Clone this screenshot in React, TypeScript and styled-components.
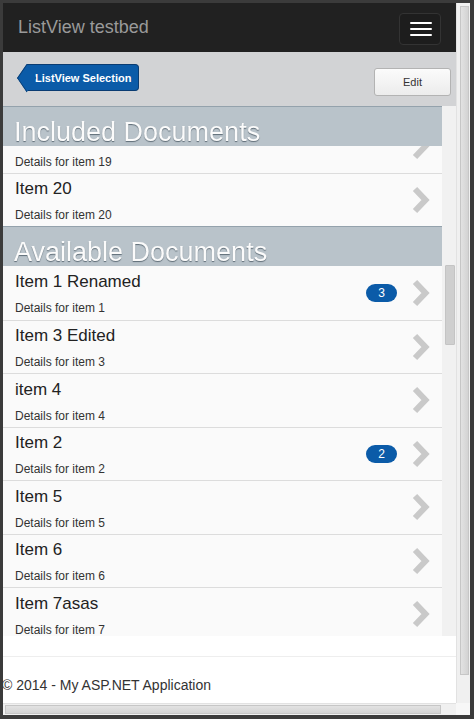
import React, { useLayoutEffect, useRef } from "react";
import styled, { createGlobalStyle } from "styled-components";

const GlobalStyle = createGlobalStyle`
  html, body {
    margin: 0;
    padding: 0;
    background: #3b3b3b;
    font-family: "Liberation Sans", Arial, sans-serif;
  }
`;

const Frame = styled.div`
  padding: 3px 4px 4px 3px;
  width: 467px;
  height: 712px;
`;

const Window = styled.div`
  display: grid;
  grid-template-columns: 453px 14px;
  grid-template-rows: 700px 12px;
  width: 467px;
  height: 712px;
`;

const Page = styled.div`
  display: flex;
  flex-direction: column;
  background: #fff;
  overflow: hidden;
`;

const Navbar = styled.nav`
  display: flex;
  align-items: center;
  justify-content: space-between;
  height: 49px;
  flex-shrink: 0;
  padding: 0 15px;
  background: #212121;
  box-sizing: border-box;
`;

const Brand = styled.span`
  font-size: 18px;
  line-height: 24px;
  color: #9a9a9a;
  padding-bottom: 2px;
`;

const Toggle = styled.button`
  display: flex;
  flex-direction: column;
  justify-content: center;
  gap: 4px;
  width: 42px;
  height: 32px;
  padding: 0 9px 0 10px;
  margin-top: 2px;
  background: #1d1d1d;
  border: 1px solid #333;
  border-radius: 4px;
`;

const Bar = styled.span`
  display: block;
  width: 22px;
  height: 2px;
  background: #fff;
  border-radius: 1px;
`;

const Header = styled.div`
  display: flex;
  justify-content: space-between;
  align-items: flex-start;
  height: 54px;
  flex-shrink: 0;
  background: #d2d3d5;
  box-sizing: border-box;
  padding: 12px 5px 0 24px;
`;

const BackButton = styled.button`
  position: relative;
  height: 27px;
  padding: 0 7px 0 8px;
  background: #0b5ba8;
  border: 1px solid #0a3c72;
  border-left: none;
  border-radius: 0 4px 4px 0;
  color: #fff;
  font-family: "Liberation Sans", Arial, sans-serif;
  font-weight: bold;
  font-size: 11px;
  line-height: 14px;

  &::before {
    content: "";
    position: absolute;
    left: -10px;
    top: 50%;
    width: 18.5px;
    height: 18.5px;
    margin-top: -9.25px;
    background: #0b5ba8;
    border-left: 1px solid #0a3c72;
    border-bottom: 1px solid #0a3c72;
    transform: scaleX(0.68) rotate(45deg);
  }
`;

const EditButton = styled.button`
  width: 77px;
  height: 28px;
  margin-top: 4px;
  background: linear-gradient(#fbfbfb, #ececec);
  border: 1px solid #b3b3b3;
  border-radius: 3px;
  color: #333;
  font-family: "Liberation Sans", Arial, sans-serif;
  font-size: 11px;
  line-height: 14px;
`;

const ListArea = styled.div`
  display: flex;
  height: 530px;
  flex-shrink: 0;
`;

const Viewport = styled.div`
  width: 439px;
  height: 530px;
  overflow: hidden;
  background: #fafafa;
`;

const Group = styled.section``;

const GroupHeader = styled.div`
  position: sticky;
  top: 0;
  z-index: 1;
  height: 40px;
  box-sizing: border-box;
  padding: 11px 0 0 11px;
  background: #b9c3ca;
  border-top: 1px solid #94a2ac;
  color: #fbfbfb;
  font-size: 27px;
  line-height: 28px;
  text-shadow: 0 1px 1px #5f6d77;
  white-space: nowrap;
`;

const Item = styled.div`
  display: flex;
  align-items: center;
  height: 53.5px;
  box-sizing: border-box;
  padding: 0 10px 0 12px;
  background: #fafafa;
  color: #222;

  & + & {
    border-top: 1px solid #dcdcdc;
  }
`;

const ItemText = styled.div`
  flex: 1;
  display: flex;
  flex-direction: column;
`;

const Title = styled.div`
  font-size: 17px;
  line-height: 20px;
  margin-top: 2px;
`;

const Details = styled.div`
  font-size: 12px;
  line-height: 14px;
  margin-top: 9px;
  color: #333;
`;

const Badge = styled.span`
  display: flex;
  align-items: center;
  justify-content: center;
  width: 31px;
  height: 18px;
  margin-right: 15px;
  border-radius: 9px;
  background: #0b5ba8;
  color: #fff;
  font-size: 12px;
`;

const InnerScroll = styled.div`
  width: 14px;
  height: 530px;
  background: #f1f1f1;
  box-sizing: border-box;
  padding: 0 1px 0 3px;
`;

const InnerThumb = styled.div`
  height: 80px;
  margin-top: 159px;
  background: #cfcfcf;
  border: 1px solid #c4c4c4;
  box-sizing: border-box;
  border-radius: 1px;
`;

const Footer = styled.footer`
  flex: 1;
  background: #fff;
  padding-top: 20px;
`;

const Rule = styled.hr`
  margin: 0;
  border: 0;
  border-top: 1px solid #eee;
`;

const Copy = styled.p`
  margin: 18px 0 0 -1px;
  font-size: 14px;
  line-height: 20px;
  color: #333;
`;

const VScroll = styled.div`
  background: #f0f0f0;
  border-left: 1px solid #e2e2e2;
  box-sizing: border-box;
  padding: 3px 1px 0 3px;
`;

const VThumb = styled.div`
  height: 669px;
  background: linear-gradient(90deg, #e2e2e2, #d3d3d3);
  border: 1px solid #c6c6c6;
  box-sizing: border-box;
`;

const HScroll = styled.div`
  background: #f0f0f0;
  border-top: 1px solid #e2e2e2;
  box-sizing: border-box;
  padding: 1px 0 1px 2px;
`;

const HThumb = styled.div`
  width: 436px;
  height: 100%;
  background: linear-gradient(#e2e2e2, #d3d3d3);
  border: 1px solid #c6c6c6;
  box-sizing: border-box;
`;

const Corner = styled.div`
  background: #f7f7f7;
`;

const Chevron = () => (
  <svg width="20" height="28" viewBox="0 0 20 28">
    <polyline points="3,3 13.5,14 3,25" fill="none" stroke="#c9c9c9" strokeWidth="6" strokeLinejoin="miter" />
  </svg>
);

type Entry = { title: string; details: string; count?: number };

const included: Entry[] = [17, 18, 19, 20].map((n) => ({
  title: `Item ${n}`,
  details: `Details for item ${n}`,
}));

const available: Entry[] = [
  { title: "Item 1 Renamed", details: "Details for item 1", count: 3 },
  { title: "Item 3 Edited", details: "Details for item 3" },
  { title: "item 4", details: "Details for item 4" },
  { title: "Item 2", details: "Details for item 2", count: 2 },
  { title: "Item 5", details: "Details for item 5" },
  { title: "Item 6", details: "Details for item 6" },
  { title: "Item 7asas", details: "Details for item 7" },
  { title: "Item 8", details: "Details for item 8" },
];

function DocGroup({ heading, items }: { heading: string; items: Entry[] }) {
  return (
    <Group>
      <GroupHeader>{heading}</GroupHeader>
      {items.map((it) => (
        <Item key={it.title}>
          <ItemText>
            <Title>{it.title}</Title>
            <Details>{it.details}</Details>
          </ItemText>
          {it.count !== undefined && <Badge>{it.count}</Badge>}
          <Chevron />
        </Item>
      ))}
    </Group>
  );
}

export default function App() {
  const listRef = useRef<HTMLDivElement>(null);

  // the list is shown scrolled so that "Included Documents" sits over item 19
  useLayoutEffect(() => {
    if (listRef.current) listRef.current.scrollTop = 134;
  }, []);

  return (
    <>
      <GlobalStyle />
      <Frame>
        <Window>
          <Page>
            <Navbar>
              <Brand>ListView testbed</Brand>
              <Toggle aria-label="menu">
                <Bar />
                <Bar />
                <Bar />
              </Toggle>
            </Navbar>
            <Header>
              <BackButton>ListView Selection</BackButton>
              <EditButton>Edit</EditButton>
            </Header>
            <ListArea>
              <Viewport ref={listRef}>
                <DocGroup heading="Included Documents" items={included} />
                <DocGroup heading="Available Documents" items={available} />
              </Viewport>
              <InnerScroll>
                <InnerThumb />
              </InnerScroll>
            </ListArea>
            <Footer>
              <Rule />
              <Copy>© 2014 - My ASP.NET Application</Copy>
            </Footer>
          </Page>
          <VScroll>
            <VThumb />
          </VScroll>
          <HScroll>
            <HThumb />
          </HScroll>
          <Corner />
        </Window>
      </Frame>
    </>
  );
}
